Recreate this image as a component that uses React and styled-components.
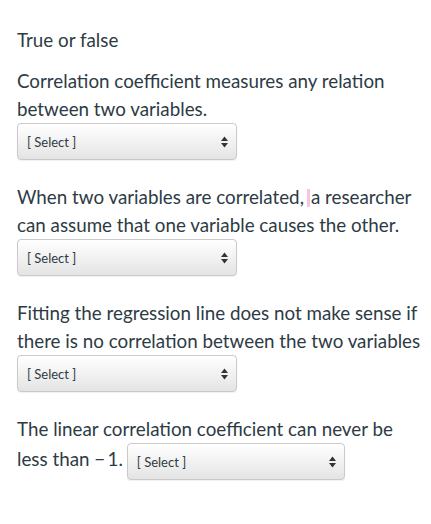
import styled, { createGlobalStyle } from 'styled-components'

const Global = createGlobalStyle`
    body {
        margin: 0;
        background: #fff;
        font-family: Lato, "Open Sans", sans-serif;
        color: #2d3b45;
    }
`

const Page = styled.div`
    display: flex;
    flex-direction: column;
    gap: 23px;
    padding: 26px 6px 20px 17px;
`

const Intro = styled.p`
    margin: 0 0 -10px 0;
    font-size: 18.8px;
    line-height: 28px;
`

const Question = styled.div`
    display: flex;
    flex-direction: column;
    align-items: flex-start;
`

const Texto = styled.p`
    margin: 0;
    font-size: 18.8px;
    line-height: 28px;
`

const Cursor = styled.span`
    display: inline-block;
    width: 3px;
    height: 18px;
    background: #f7c6de;
    vertical-align: -3px;
    margin: 0 1px 0 3px;
`

const Seletor = styled.span`
    display: inline-flex;
    align-items: center;
    justify-content: space-between;
    box-sizing: border-box;
    width: ${p => p.width || '220px'};
    height: 37px;
    padding: 0 8px 0 9px;
    border: 1px solid #c9c9c9;
    border-radius: 4px;
    background: linear-gradient(#ffffff, #e4e4e4);
    box-shadow: inset 0 1px 0 #fff, 0 1px 1px rgba(0, 0, 0, 0.06);
    font-size: 13px;
    line-height: 16px;
    color: #2d3b45;
    vertical-align: middle;
    margin-left: ${p => p.inline ? '4px' : '0'};
`

const Setas = () => (
    <svg width="7" height="12" viewBox="0 0 7 12">
        <polygon points="3.5,0.5 7,5 0,5" fill="#333" />
        <polygon points="0,7 7,7 3.5,11.5" fill="#333" />
    </svg>
)

function Select ({ inline, width }) {
    return (
        <Seletor inline={inline} width={width}>
            <span>[ Select ]</span>
            <Setas />
        </Seletor>
    )
}

export default function App () {
    return (
        <Page>
            <Global />
            <Intro>True or false</Intro>
            <Question>
                <Texto>Correlation coefficient measures any relation between two variables.</Texto>
                <Select />
            </Question>
            <Question>
                <Texto>When two variables are correlated,<Cursor />a researcher can assume that one variable causes the other.</Texto>
                <Select />
            </Question>
            <Question>
                <Texto>Fitting the regression line does not make sense if there is no correlation between the two variables</Texto>
                <Select />
            </Question>
            <Question>
                <Texto>
                    The linear correlation coefficient can never be less than {'\u2212\u20091.'}
                    <Select inline width="218px" />
                </Texto>
            </Question>
        </Page>
    )
}
